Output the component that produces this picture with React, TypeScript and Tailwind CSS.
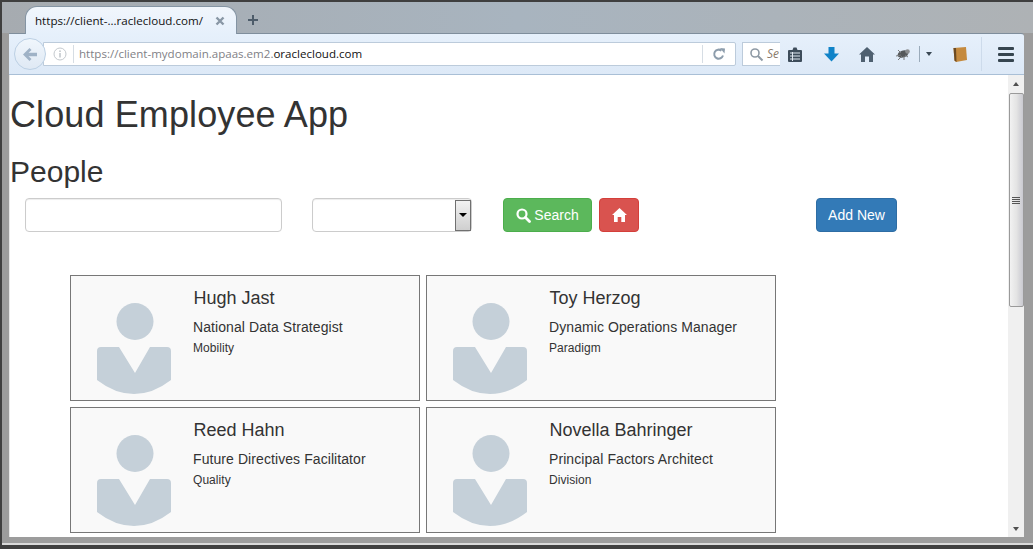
const people = [
  { name: "Hugh Jast", title: "National Data Strategist", org: "Mobility" },
  { name: "Toy Herzog", title: "Dynamic Operations Manager", org: "Paradigm" },
  { name: "Reed Hahn", title: "Future Directives Facilitator", org: "Quality" },
  { name: "Novella Bahringer", title: "Principal Factors Architect", org: "Division" },
];

function Person() {
  return (
    <svg width="74" height="92" viewBox="0 0 74 92" className="shrink-0">
      <circle cx="38" cy="18.5" r="18.5" fill="#c5d0d9" />
      <path d="M0 48 Q0 44 4 44 L22 44 L38 70 L53 44 L70 44 Q74 44 74 48 L74 77 Q56 91 37 91 Q18 91 0 77 Z" fill="#c5d0d9" />
    </svg>
  );
}

function Card({ p }: { p: (typeof people)[number] }) {
  return (
    <div className="w-[350px] h-[126px] border border-[#777777] bg-[#f9f9f9] flex pl-[26px] pt-[27px]">
      <Person />
      <div className="ml-[22px] -mt-[27px] pt-[12px] text-[#333333]">
        <div className="text-[18px] leading-[20px] ml-[0.5px]">{p.name}</div>
        <div className="text-[14px] leading-[20px] mt-[9px] tracking-[0.08px]">{p.title}</div>
        <div className="text-[12px] leading-[17px] mt-[3px] tracking-[0.05px]">{p.org}</div>
      </div>
    </div>
  );
}

function SearchGlyph() {
  return (
    <svg width="15" height="15" viewBox="0 0 15 15" className="shrink-0">
      <circle cx="6" cy="6" r="4.5" fill="none" stroke="#fff" strokeWidth="2.2" />
      <path d="M9.5 9.5 L13.5 13.5" stroke="#fff" strokeWidth="2.8" strokeLinecap="round" />
    </svg>
  );
}

function Toolbar() {
  return (
    <div className="h-[42px] bg-gradient-to-b from-[#e6f0fb] to-[#dde9f7] border-t border-b border-t-[#7f8e9c] border-b-[#a9bfd6] rounded-tr-[3px] flex items-center pl-[5px] shrink-0">
      <div className="relative z-10 w-[32px] h-[32px] rounded-full border border-[#bcd0e4] bg-gradient-to-b from-[#f0f6fc] to-[#dfe9f4] flex items-center justify-center shrink-0">
        <svg width="16" height="15" viewBox="0 0 16 15">
          <path d="M7.5 1 L1 7.5 L7.5 14 L9.5 12 L6.5 9.2 L15 9.2 L15 5.8 L6.5 5.8 L9.5 3 Z" fill="#9fb2c6" />
        </svg>
      </div>
      <div className="-ml-[3px] w-[693px] h-[24px] bg-white border border-[#bccbdb] rounded-r-[2px] flex items-center shrink-0 font-['Open_Sans',sans-serif] text-[11.55px]">
        <svg width="14" height="14" viewBox="0 0 14 14" className="ml-[9px] shrink-0">
          <circle cx="7" cy="7" r="6" fill="none" stroke="#c4c9ce" strokeWidth="1" />
          <rect x="6.2" y="6" width="1.6" height="4.5" fill="#c4c9ce" />
          <rect x="6.2" y="3.4" width="1.6" height="1.6" fill="#c4c9ce" />
        </svg>
        <div className="w-px h-[18px] bg-[#d6dde4] ml-[6px]" />
        <div className="ml-[5px] whitespace-nowrap flex-1 text-[#7f7f86]">
          https://client-mydomain.apaas.em2.<span className="text-[#111111]">oraclecloud.com</span>
        </div>
        <div className="w-px h-[18px] bg-[#d6dde4]" />
        <svg width="14" height="14" viewBox="0 0 14 14" className="mx-[9px] shrink-0">
          <path d="M11 8.5 A4.5 4.5 0 1 1 9.5 3.6" fill="none" stroke="#8d9dac" strokeWidth="2" />
          <path d="M8 1 L13 1.5 L12.5 6.5 Z" fill="#8d9dac" />
        </svg>
      </div>
      <div className="ml-[6px] w-[38px] h-[24px] bg-white border border-r-0 border-[#bccbdb] flex items-center overflow-hidden shrink-0">
        <svg width="15" height="15" viewBox="0 0 15 15" className="ml-[6px] shrink-0">
          <circle cx="6" cy="6" r="4" fill="none" stroke="#8e9aa5" strokeWidth="1.6" />
          <path d="M9 9 L13.5 13.5" stroke="#8e9aa5" strokeWidth="2" />
        </svg>
        <span className="ml-[3px] italic text-[12px] text-[#8a7a6a] font-['Open_Sans',sans-serif]">Se</span>
      </div>
      <div className="w-[36px] flex justify-center shrink-0 -ml-[3px]">
        <svg width="14" height="15" viewBox="0 0 14 15">
          <path d="M1 3 L4.5 3 L5.5 0.5 L8.5 0.5 L9.5 3 L13 3 Q14 3 14 4 L14 14 Q14 15 13 15 L1 15 Q0 15 0 14 L0 4 Q0 3 1 3 Z" fill="#3d4c5a" />
          <path d="M2 6 H12 M2 9 H12 M2 12 H12" stroke="#e0e8f1" strokeWidth="1" />
          <path d="M4.5 5 V14" stroke="#e0e8f1" strokeWidth="1" />
        </svg>
      </div>
      <div className="w-[36px] flex justify-center shrink-0">
        <svg width="15" height="15" viewBox="0 0 15 15">
          <path d="M4.5 0 H10.5 V6.5 H15 L7.5 14.5 L0 6.5 H4.5 Z" fill="#1083c8" />
        </svg>
      </div>
      <div className="w-[36px] flex justify-center shrink-0">
        <svg width="16" height="15" viewBox="0 0 16 15">
          <path d="M8 0 L16 7.5 L14 7.5 L14 15 L10 15 L10 9.5 L6 9.5 L6 15 L2 15 L2 7.5 L0 7.5 Z" fill="#4f6070" />
        </svg>
      </div>
      <div className="w-[34px] flex justify-center shrink-0">
        <svg width="17" height="13" viewBox="0 0 17 13">
          <ellipse cx="9" cy="6" rx="5.5" ry="3.5" fill="#55585a" transform="rotate(-18 9 6)" />
          <circle cx="13.5" cy="3.5" r="2.3" fill="#8b8d8f" />
          <path d="M4 2 L7 5 M2 8 L7 7 M4 12 L8 8 M10 12 L10 8 M14 9 L11 7" stroke="#77797b" strokeWidth="1" />
        </svg>
      </div>
      <div className="w-px h-[16px] bg-[#9aabbb] shrink-0" />
      <div className="w-[18px] flex justify-center shrink-0">
        <div className="w-0 h-0 border-l-[3.5px] border-r-[3.5px] border-t-[4px] border-l-transparent border-r-transparent border-t-[#3a4854]" />
      </div>
      <div className="w-[44px] flex justify-center shrink-0">
        <svg width="14" height="15" viewBox="0 0 14 15">
          <path d="M0.5 1 L13 0 L14 13 L3 15 L1.5 13.5 Z" fill="#c58a3e" />
          <path d="M0.5 1 L3 1 L3.5 15 L1.5 13.5 Z" fill="#6b4a22" />
        </svg>
      </div>
      <div className="w-px h-[34px] bg-[#cddbeb] shrink-0 -ml-[1px]" />
      <div className="flex flex-col gap-[3px] ml-[16px] shrink-0">
        <div className="w-[16px] h-[3px] bg-[#36454f] rounded-[1px]" />
        <div className="w-[16px] h-[3px] bg-[#36454f] rounded-[1px]" />
        <div className="w-[16px] h-[3px] bg-[#36454f] rounded-[1px]" />
      </div>
    </div>
  );
}

function Scrollbar() {
  return (
    <div className="w-[16px] shrink-0 bg-[#f0f0f0] flex flex-col items-center">
      <div className="h-[18px] flex items-center justify-center shrink-0">
        <div className="w-0 h-0 border-l-[3.5px] border-r-[3.5px] border-b-[4px] border-l-transparent border-r-transparent border-b-[#505050]" />
      </div>
      <div className="w-[15px] h-[214px] border border-[#9a9a9a] rounded-[2px] bg-gradient-to-r from-[#f2f2f2] via-[#e4e4e4] to-[#c9c9d0] flex flex-col items-center justify-center gap-[1px] shrink-0">
        <div className="w-[8px] h-px bg-[#555555]" />
        <div className="w-[8px] h-px bg-[#555555]" />
        <div className="w-[8px] h-px bg-[#555555]" />
        <div className="w-[8px] h-px bg-[#555555]" />
      </div>
      <div className="flex-1" />
      <div className="h-[16px] flex items-center justify-center shrink-0">
        <div className="w-0 h-0 border-l-[3.5px] border-r-[3.5px] border-t-[4px] border-l-transparent border-r-transparent border-t-[#505050]" />
      </div>
    </div>
  );
}

export default function App() {
  return (
    <div className="w-[1033px] h-[549px] overflow-hidden flex flex-col pl-[7px] pr-[9px] border-l-2 border-t-2 border-[#3f3f3f] bg-[#9c9c9c] font-['Liberation_Sans',Arial,sans-serif]">
      <div className="h-[31px] -ml-[7px] -mr-[9px] flex items-end shrink-0 pl-[23px] bg-gradient-to-r from-[#a6abb0] via-[#a8b4bf] to-[#aeb2b5]">
        <div className="w-[212px] h-[28px] bg-gradient-to-b from-[#f1f6fc] to-[#e6f0fb] border border-b-0 border-[#8494a3] rounded-t-[12px] flex items-center pl-[9px] font-['Open_Sans',sans-serif] text-[11.6px] text-[#111111] relative -mb-[1px] z-10">
          <span className="whitespace-nowrap">https://client-...raclecloud.com/</span>
          <svg width="10" height="10" viewBox="0 0 10 10" className="ml-[12px] shrink-0">
            <path d="M1.5 1.5 L8.5 8.5 M8.5 1.5 L1.5 8.5" stroke="#8997a5" strokeWidth="2.4" />
          </svg>
        </div>
        <svg width="12" height="12" viewBox="0 0 12 12" className="ml-[10px] mb-[7px] shrink-0">
          <path d="M6 1 V11 M1 6 H11" stroke="#4d5c6a" strokeWidth="2" />
        </svg>
      </div>
      <Toolbar />
      <div className="flex-1 min-h-0 flex bg-white border-l border-[#e8e8e8]">
        <div className="flex-1 min-w-0 overflow-hidden text-[#333333]">
          <h1 className="text-[36px] leading-[39.6px] mt-[20px] font-normal tracking-[0.11px]">Cloud Employee App</h1>
          <h2 className="text-[30px] leading-[33px] mt-[20px] font-normal">People</h2>
          <div className="flex mt-[10px] pl-[15px] h-[34px]">
            <input className="w-[257px] h-[34px] border border-[#cccccc] rounded-[4px] bg-white shadow-[inset_0_1px_1px_rgba(0,0,0,0.075)]" />
            <div className="ml-[30px] w-[160px] h-[34px] border border-[#cccccc] rounded-[4px] bg-white shadow-[inset_0_1px_1px_rgba(0,0,0,0.075)] flex justify-end pt-px">
              <div className="w-[16px] h-[31px] border border-[#707070] bg-gradient-to-b from-[#f2f2f2] to-[#cfcfcf] flex items-center justify-center">
                <div className="w-0 h-0 border-l-[4px] border-r-[4px] border-t-[4px] border-l-transparent border-r-transparent border-t-black" />
              </div>
            </div>
            <button className="ml-[31px] w-[89px] h-[34px] pt-px rounded-[4px] bg-[#5cb85c] border border-[#4cae4c] text-white text-[14px] flex items-center justify-center gap-[3px]">
              <SearchGlyph />
              Search
            </button>
            <button className="ml-[7px] w-[40px] h-[34px] rounded-[4px] bg-[#d9534f] border border-[#d43f3a] flex items-center justify-center">
              <svg width="15" height="14" viewBox="0 0 15 14">
                <path d="M7.5 0 L15 7 L13 7 L13 14 L9.3 14 L9.3 9 L5.7 9 L5.7 14 L2 14 L2 7 L0 7 Z" fill="#fff" />
              </svg>
            </button>
            <button className="ml-[177px] w-[81px] h-[34px] pt-px rounded-[4px] bg-[#337ab7] border border-[#2e6da4] text-white text-[14px]">
              Add New
            </button>
          </div>
          <div className="grid grid-cols-[350px_350px] gap-[6px] ml-[60px] mt-[43px]">
            {people.map((p) => (
              <Card key={p.name} p={p} />
            ))}
          </div>
        </div>
        <Scrollbar />
      </div>
      <div className="h-[6px] shrink-0" />
      <div className="h-[2px] -ml-[7px] -mr-[9px] bg-[#d9d9d9] shrink-0" />
      <div className="h-[4px] -ml-[7px] -mr-[9px] bg-[#3f3f3f] shrink-0" />
    </div>
  );
}
